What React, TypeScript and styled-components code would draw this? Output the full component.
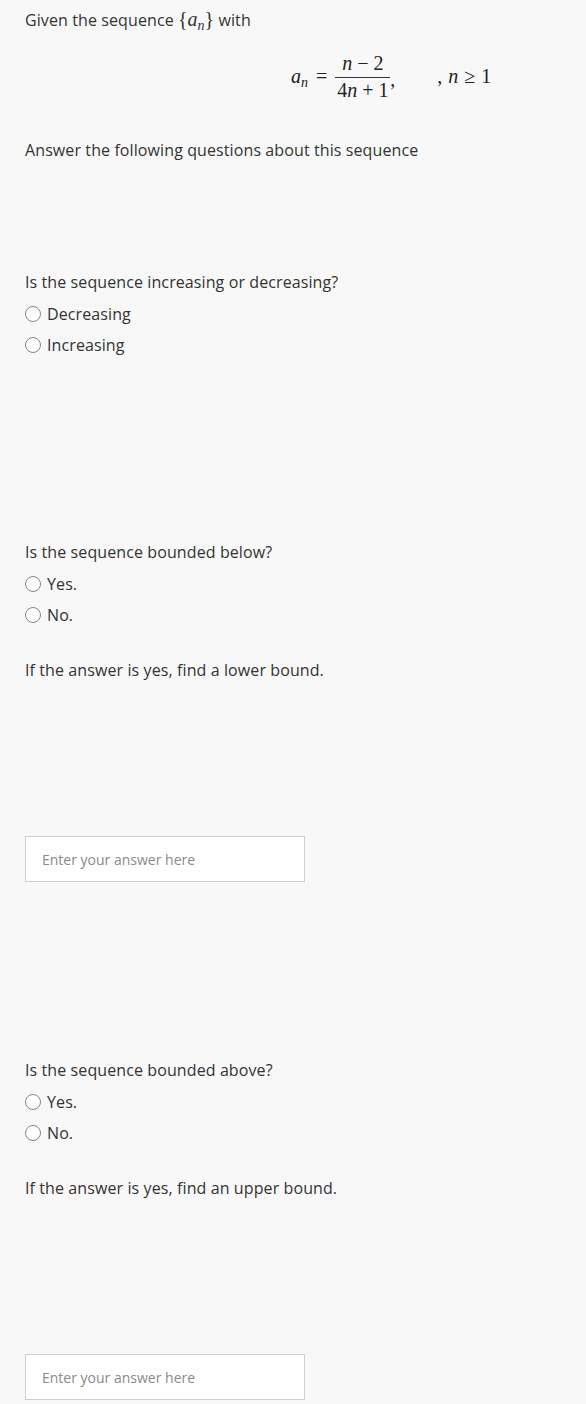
import styled, { createGlobalStyle } from 'styled-components';

const GlobalStyle = createGlobalStyle`
  html, body {
    margin: 0;
    padding: 0;
    background: #f8f8f8;
  }
  body {
    font-family: 'Open Sans', 'Noto Sans', sans-serif;
    color: #333;
  }
`;

const Page = styled.div`
  padding: 8px 25px 0;
  width: 586px;
  box-sizing: border-box;
`;

const Text = styled.p<{ $top?: number }>`
  margin: ${(p) => p.$top ?? 0}px 0 0;
  font-size: 16px;
  line-height: 22px;
  letter-spacing: 0.1px;
`;

const MathInline = styled.span`
  font-family: 'Liberation Serif', 'DejaVu Serif', serif;
  font-size: 20px;
  letter-spacing: 0;
`;

const Ital = styled.i`
  font-family: 'Liberation Serif', 'DejaVu Serif', serif;
  font-style: italic;
`;

const Sub = styled.sub`
  font-size: 0.7em;
  vertical-align: -0.25em;
  line-height: 0;
`;

const Display = styled.div`
  margin-top: 20px;
  height: 50px;
  display: flex;
  align-items: center;
  padding-left: 266px;
  font-family: 'Liberation Serif', 'DejaVu Serif', serif;
  font-size: 20px;
  color: #222;
`;

const Eq = styled.span`
  margin: 0 8px;
`;

const Frac = styled.span`
  display: inline-flex;
  flex-direction: column;
  align-items: center;
  width: 55px;
`;

const Num = styled.span`
  line-height: 22px;
  padding-bottom: 3px;
  border-bottom: 1px solid #333;
  width: 100%;
  text-align: center;
`;

const Den = styled.span`
  line-height: 22px;
  padding-top: 1px;
`;

const Comma = styled.span`
  align-self: center;
  margin-top: 6px;
`;

const Cond = styled.span`
  margin-left: 42px;
  word-spacing: 1px;
`;

const Options = styled.div`
  margin-top: 10px;
  display: flex;
  flex-direction: column;
  gap: 9px;
`;

const Option = styled.label`
  display: flex;
  align-items: center;
  gap: 6px;
  font-size: 16px;
  line-height: 22px;
  letter-spacing: 0.1px;
`;

const Radio = styled.span`
  width: 16px;
  height: 16px;
  border-radius: 50%;
  border: 1px solid #858585;
  background: #fff;
  box-sizing: border-box;
`;

const Input = styled.input<{ $top: number }>`
  display: block;
  margin-top: ${(p) => p.$top}px;
  width: 280px;
  height: 46px;
  box-sizing: border-box;
  border: 1px solid #cfcfcf;
  background: #fff;
  padding: 0 16px;
  font-family: 'Open Sans', 'Noto Sans', sans-serif;
  font-size: 14px;
  color: #333;
  outline: none;
  &::placeholder {
    color: #8a8a8a;
  }
`;

const RadioGroup = ({ items }: { items: string[] }) => (
  <Options>
    {items.map((t) => (
      <Option key={t}>
        <Radio />
        {t}
      </Option>
    ))}
  </Options>
);

export default function App() {
  return (
    <>
      <GlobalStyle />
      <Page>
        <Text>
          Given the sequence{' '}
          <MathInline>
            {'{'}
            <Ital>a</Ital>
            <Sub>
              <Ital>n</Ital>
            </Sub>
            {'}'}
          </MathInline>{' '}
          with
        </Text>
        <Display>
          <span>
            <Ital>a</Ital>
            <Sub>
              <Ital>n</Ital>
            </Sub>
          </span>
          <Eq>=</Eq>
          <Frac>
            <Num>
              <Ital>n</Ital> − 2
            </Num>
            <Den>
              4<Ital>n</Ital> + 1
            </Den>
          </Frac>
          <Comma>,</Comma>
          <Cond>
            , <Ital>n</Ital> ≥ 1
          </Cond>
        </Display>
        <Text $top={38}>Answer the following questions about this sequence</Text>

        <Text $top={110}>Is the sequence increasing or decreasing?</Text>
        <RadioGroup items={['Decreasing', 'Increasing']} />

        <Text $top={185}>Is the sequence bounded below?</Text>
        <RadioGroup items={['Yes.', 'No.']} />
        <Text $top={33}>If the answer is yes, find a lower bound.</Text>
        <Input $top={155} placeholder="Enter your answer here" />

        <Text $top={177}>Is the sequence bounded above?</Text>
        <RadioGroup items={['Yes.', 'No.']} />
        <Text $top={33}>If the answer is yes, find an upper bound.</Text>
        <Input $top={155} placeholder="Enter your answer here" />
      </Page>
    </>
  );
}
